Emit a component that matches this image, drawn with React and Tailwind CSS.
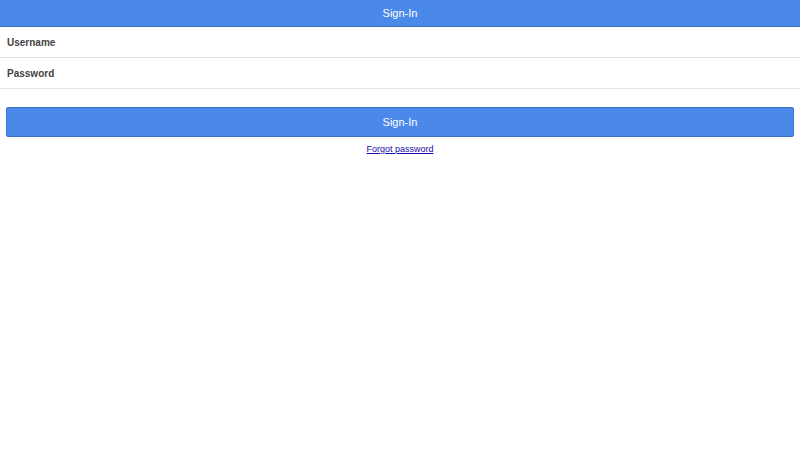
export default function App() {
  return (
    <div className="min-h-screen bg-white font-['Liberation_Sans',Arial,sans-serif]">
      <div className="flex h-[27px] items-center justify-center border-b border-[#3e73c8] bg-[#4a89ea] text-[11px] text-white">
        Sign-In
      </div>
      <div className="flex h-[31px] items-center border-b border-[#e3e3e3] px-[7px] text-[10px] font-bold text-[#444]">
        Username
      </div>
      <div className="flex h-[31px] items-center border-b border-[#e3e3e3] px-[7px] text-[10px] font-bold text-[#444]">
        Password
      </div>
      <div className="px-[6px] pt-[18px]">
        <button className="flex h-[30px] w-full items-center justify-center rounded-[2px] border border-[#3e73c8] bg-[#4a89ea] text-[11px] text-white">
          Sign-In
        </button>
      </div>
      <div className="mt-[8px] text-center text-[9px] leading-none">
        <a href="#" className="text-[#1a0dab] underline">
          Forgot password
        </a>
      </div>
    </div>
  );
}
